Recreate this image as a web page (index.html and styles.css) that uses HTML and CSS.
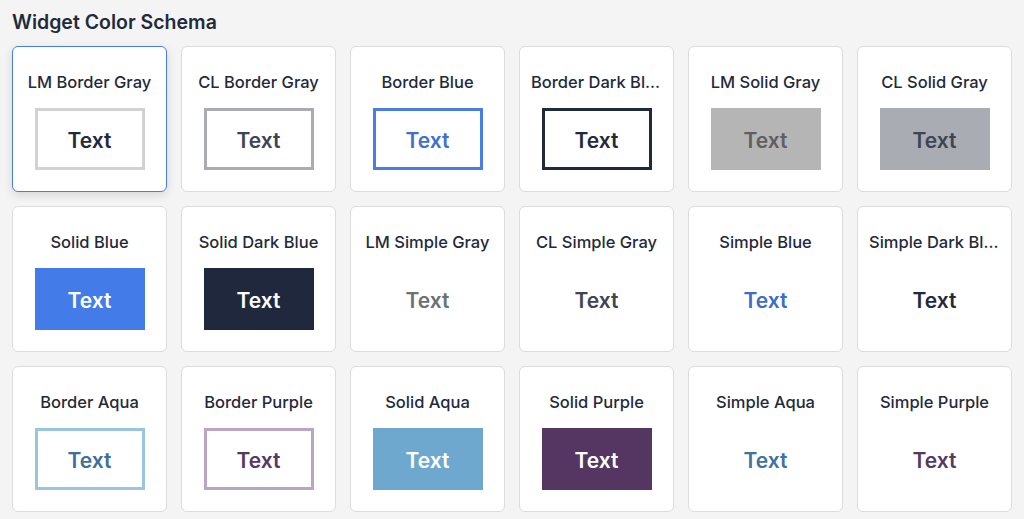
FILE: index.html
```html
<!DOCTYPE html>
<html>
<head>
  <meta charset="UTF-8">
  <title>Widget Color Schema</title>
  <link rel="stylesheet" href="styles.css">
</head>
<body>
  <div class="schema-panel">
    <h2 class="schema-title">Widget Color Schema</h2>
    <div class="schema-grid">
      <div class="schema-card selected">
        <div class="card-label">LM Border Gray</div>
        <div class="swatch lm-border-gray">Text</div>
      </div>
      <div class="schema-card">
        <div class="card-label">CL Border Gray</div>
        <div class="swatch cl-border-gray">Text</div>
      </div>
      <div class="schema-card">
        <div class="card-label">Border Blue</div>
        <div class="swatch border-blue">Text</div>
      </div>
      <div class="schema-card">
        <div class="card-label">Border Dark Blue</div>
        <div class="swatch border-dark-blue">Text</div>
      </div>
      <div class="schema-card">
        <div class="card-label">LM Solid Gray</div>
        <div class="swatch lm-solid-gray">Text</div>
      </div>
      <div class="schema-card">
        <div class="card-label">CL Solid Gray</div>
        <div class="swatch cl-solid-gray">Text</div>
      </div>

      <div class="schema-card">
        <div class="card-label">Solid Blue</div>
        <div class="swatch solid-blue">Text</div>
      </div>
      <div class="schema-card">
        <div class="card-label">Solid Dark Blue</div>
        <div class="swatch solid-dark-blue">Text</div>
      </div>
      <div class="schema-card">
        <div class="card-label">LM Simple Gray</div>
        <div class="swatch lm-simple-gray">Text</div>
      </div>
      <div class="schema-card">
        <div class="card-label">CL Simple Gray</div>
        <div class="swatch cl-simple-gray">Text</div>
      </div>
      <div class="schema-card">
        <div class="card-label">Simple Blue</div>
        <div class="swatch simple-blue">Text</div>
      </div>
      <div class="schema-card">
        <div class="card-label">Simple Dark Blue</div>
        <div class="swatch simple-dark-blue">Text</div>
      </div>

      <div class="schema-card">
        <div class="card-label">Border Aqua</div>
        <div class="swatch border-aqua">Text</div>
      </div>
      <div class="schema-card">
        <div class="card-label">Border Purple</div>
        <div class="swatch border-purple">Text</div>
      </div>
      <div class="schema-card">
        <div class="card-label">Solid Aqua</div>
        <div class="swatch solid-aqua">Text</div>
      </div>
      <div class="schema-card">
        <div class="card-label">Solid Purple</div>
        <div class="swatch solid-purple">Text</div>
      </div>
      <div class="schema-card">
        <div class="card-label">Simple Aqua</div>
        <div class="swatch simple-aqua">Text</div>
      </div>
      <div class="schema-card">
        <div class="card-label">Simple Purple</div>
        <div class="swatch simple-purple">Text</div>
      </div>
    </div>
  </div>
</body>
</html>
```

FILE: styles.css
```css
* {
  margin: 0;
  padding: 0;
  box-sizing: border-box;
}

body {
  font-family: Inter, Lato, sans-serif;
  background: #f4f4f4;
  color: #1f2a3c;
}

.schema-panel {
  padding: 9px 12px 0;
}

.schema-title {
  font-size: 19.5px;
  font-weight: 600;
  line-height: 26px;
  margin-bottom: 11px;
  color: #1f2a3c;
}

.schema-grid {
  display: grid;
  grid-template-columns: repeat(6, 155px);
  grid-auto-rows: 146px;
  gap: 14px;
}

.schema-card {
  background: #fff;
  border: 1px solid #dcdce0;
  border-radius: 6px;
  display: flex;
  flex-direction: column;
  align-items: center;
  padding: 24px 11px 0;
}

.schema-card.selected {
  border: 1.5px solid #4a7ce8;
  box-shadow: 0 3px 10px rgba(0, 0, 0, 0.12);
}

.card-label {
  font-size: 16.5px;
  font-weight: 500;
  line-height: 22px;
  width: 100%;
  text-align: center;
  white-space: nowrap;
  overflow: hidden;
  text-overflow: ellipsis;
  color: #1f2a3c;
}

.swatch {
  margin-top: 15px;
  width: 110px;
  height: 62px;
  padding-top: 3px;
  display: flex;
  align-items: center;
  justify-content: center;
  font-size: 21px;
  font-weight: 600;
  border: 3px solid transparent;
}

.lm-border-gray { border-color: #d2d2d2; color: #1f2a3c; }
.cl-border-gray { border-color: #a9acb2; color: #3d4456; }
.border-blue { border-color: #4a7ce8; color: #3f6fcf; }
.border-dark-blue { border-color: #1f2a3c; color: #1f2a3c; }
.lm-solid-gray { background: #b5b5b5; color: #5f5f5f; }
.cl-solid-gray { background: #a9adb3; color: #3d4456; }

.solid-blue { background: #437be8; color: #fff; }
.solid-dark-blue { background: #1f283c; color: #fff; }
.lm-simple-gray { color: #6b7079; }
.cl-simple-gray { color: #3d4456; }
.simple-blue { color: #3d6cc9; }
.simple-dark-blue { color: #1f2a3c; }

.border-aqua { border-color: #9ac5e0; color: #3f6f99; }
.border-purple { border-color: #b8a6c4; color: #553865; }
.solid-aqua { background: #6fa8cf; color: #fff; }
.solid-purple { background: #553662; color: #fff; }
.simple-aqua { color: #3f739f; }
.simple-purple { color: #553865; }
```
